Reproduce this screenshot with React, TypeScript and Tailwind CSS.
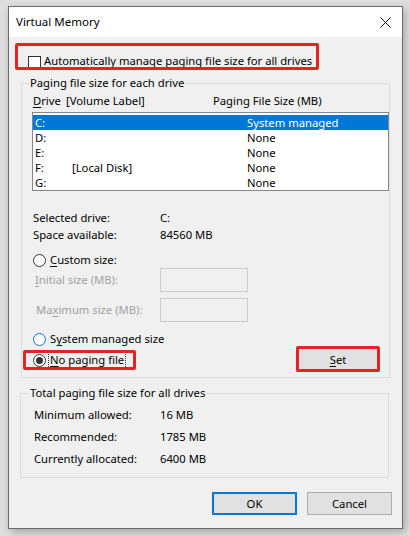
import React from "react";

const font = { fontFamily: '"Noto Sans", "Open Sans", Arial, sans-serif' };

function Radio({ checked, hover }: { checked?: boolean; hover?: boolean }) {
  return (
    <span
      className={`w-[13px] h-[13px] rounded-full border bg-white flex items-center justify-center shrink-0 ${
        hover ? "border-[#0078d7]" : "border-[#333333]"
      }`}
    >
      {checked && <span className="w-[7px] h-[7px] rounded-full bg-[#333333]" />}
    </span>
  );
}

const drives = [
  { d: "C:", label: "", size: "System managed", sel: true },
  { d: "D:", label: "", size: "None" },
  { d: "E:", label: "", size: "None" },
  { d: "F:", label: "[Local Disk]", size: "None" },
  { d: "G:", label: "", size: "None" },
];

export default function App() {
  return (
    <div
      className="w-[410px] h-[536px] bg-[#dedede] pt-[6px] pl-[8px] text-[11.25px] leading-[16px] text-black"
      style={font}
    >
      <div className="relative w-[395px] h-[523px] border border-[#6b6b6b] bg-[#f0f0f0] shadow-[2px_3px_8px_rgba(0,0,0,0.25)]">
        {/* title bar */}
        <div className="h-[30px] bg-white flex items-center justify-between pl-[7px] pr-[10px]">
          <span className="text-[11.5px]">Virtual Memory</span>
          <svg width="11" height="11" viewBox="0 0 11 11" className="mr-[1px]">
            <path d="M0.5 0.5 L10.5 10.5 M10.5 0.5 L0.5 10.5" stroke="#111" strokeWidth="1" />
          </svg>
        </div>

        {/* body */}
        <div className="px-[12px]">
          <div className="h-[16px] mt-[16px] flex items-center pl-[7px] gap-[3px]">
            <span className="w-[13px] h-[13px] border border-[#333333] bg-white shrink-0 mt-[2px]" />
            <span>Automatically manage paging file size for all drives</span>
          </div>

          <fieldset className="mt-[6px] border border-[#dcdcdc] w-[368px] h-[303px] pl-[11px]">
            <legend className="ml-[-4px] px-[1px] leading-[16px]">Paging file size for each drive</legend>
            <div className="h-[16px] mt-[2px] flex">
              <span className="w-[33px]">
                <span className="underline underline-offset-2">D</span>rive
              </span>
              <span className="w-[147px]">[Volume Label]</span>
              <span>Paging File Size (MB)</span>
            </div>
            <div className="mt-[3px] ml-[-1px] w-[357px] h-[79px] border border-[#828790] bg-white pt-[2px]">
              {drives.map((r) => (
                <div
                  key={r.d}
                  className={`h-[15px] leading-[15px] flex pl-[2px] ${
                    r.sel ? "bg-[#0078d7] text-white" : ""
                  }`}
                >
                  <span className="w-[37px]">{r.d}</span>
                  <span className="w-[175px]">{r.label}</span>
                  <span>{r.size}</span>
                </div>
              ))}
            </div>

            <div className="mt-[18px] h-[17px] leading-[17px] flex">
              <span className="w-[127px]">Selected drive:</span>
              <span>C:</span>
            </div>
            <div className="h-[17px] leading-[17px] flex">
              <span className="w-[127px]">Space available:</span>
              <span>84560 MB</span>
            </div>

            <div className="mt-[9px] h-[16px] flex items-center gap-[4px]">
              <Radio />
              <span>
                <span className="underline underline-offset-2">C</span>ustom size:
              </span>
            </div>
            <div className="h-[24px] flex items-center">
              <span className="w-[127px] pl-[2px] text-[#a0a0a0]">
                <span className="underline underline-offset-2">I</span>nitial size (MB):
              </span>
              <span className="w-[88px] h-[24px] border border-[#cccccc] bg-[#f0f0f0]" />
            </div>
            <div className="mt-[6px] h-[24px] flex items-center">
              <span className="w-[127px] pl-[3px] text-[#a0a0a0]">
                Ma<span className="underline underline-offset-2">x</span>imum size (MB):
              </span>
              <span className="w-[88px] h-[24px] border border-[#cccccc] bg-[#f0f0f0]" />
            </div>

            <div className="mt-[9px] h-[16px] flex items-center gap-[4px]">
              <Radio hover />
              <span>
                S<span className="underline underline-offset-2">y</span>stem managed size
              </span>
            </div>
            <div className="mt-[1px] h-[24px] flex items-center">
              <div className="flex items-center gap-[3px]">
                <Radio checked />
                <span className="outline outline-1 outline-dotted outline-[#333] px-[1px]">
                  <span className="underline underline-offset-2">N</span>o paging file
                </span>
              </div>
              <button className="ml-auto mr-[9px] w-[84px] h-[24px] border border-[#adadad] bg-[#e1e1e1] text-[11.25px]">
                <span className="underline underline-offset-2">S</span>et
              </button>
            </div>
          </fieldset>

          <fieldset className="mt-[7px] ml-[-1px] border border-[#dcdcdc] w-[369px] h-[93px] pl-[13px]">
            <legend className="ml-[-5px] px-[1px] leading-[16px]">Total paging file size for all drives</legend>
            <div className="mt-[3px] h-[22px] leading-[22px] flex">
              <span className="w-[126px]">Minimum allowed:</span>
              <span>16 MB</span>
            </div>
            <div className="h-[22px] leading-[22px] flex">
              <span className="w-[126px]">Recommended:</span>
              <span>1785 MB</span>
            </div>
            <div className="h-[22px] leading-[22px] flex">
              <span className="w-[126px]">Currently allocated:</span>
              <span>6400 MB</span>
            </div>
          </fieldset>

          <div className="mt-[14px] flex justify-end gap-[10px] mr-[-2px]">
            <button className="w-[85px] h-[23px] border-2 border-[#0078d7] bg-[#e1e1e1] text-[11.25px]">OK</button>
            <button className="w-[85px] h-[23px] border border-[#adadad] bg-[#e1e1e1] text-[11.25px]">Cancel</button>
          </div>
        </div>

        {/* red annotation boxes */}
        <div className="absolute left-[6px] top-[36px] w-[304px] h-[27px] border-[3px] border-[#e52323] rounded-[2px] pointer-events-none" />
        <div className="absolute left-[14px] top-[343px] w-[113px] h-[20px] border-[3px] border-[#e52323] rounded-[2px] pointer-events-none" />
        <div className="absolute left-[287px] top-[339px] w-[84px] h-[26px] border-[3px] border-[#e52323] rounded-[2px] pointer-events-none" />
      </div>
    </div>
  );
}
